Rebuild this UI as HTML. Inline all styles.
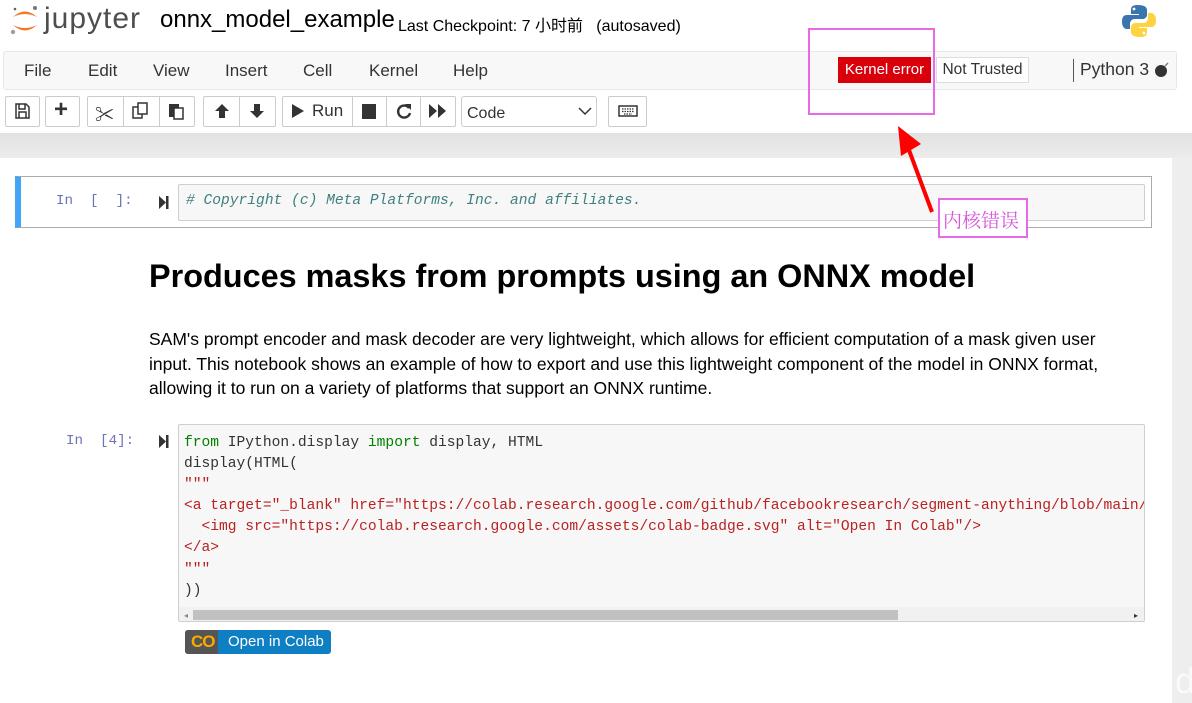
<!DOCTYPE html>
<html><head><meta charset="utf-8"><style>
*{margin:0;padding:0;box-sizing:border-box}
body{width:1192px;height:703px;overflow:hidden;background:#eee;font-family:"Liberation Sans","Noto Sans CJK SC",sans-serif;position:relative;color:#000}
.a{position:absolute}
.mono{font-family:"Liberation Mono","Noto Sans CJK SC",monospace;font-size:14.6px;white-space:pre;letter-spacing:0}
.btn{position:absolute;top:96px;height:31px;border:1px solid #ccc;background:#fff;border-radius:2px}
.menu span{position:absolute;top:61px;font-size:17px;color:#333}
.pr{font-family:"Liberation Mono",monospace;font-size:14.2px;color:#6b74b8;white-space:pre}
</style></head><body>
<div class="a" style="left:0;top:0;width:1192px;height:133px;background:#fff"></div>
<div class="a" style="left:0;top:133px;width:1192px;height:25px;background:linear-gradient(#e2e2e2,#ececec)"></div>
<div class="a" style="left:0;top:158px;width:1172px;height:545px;background:#fff"></div>
<svg class="a" style="left:8px;top:4px" width="34" height="34" viewBox="0 0 34 34">
<path d="M5 13 Q17 2 29 13 Q17 7 5 13Z" fill="#f37726"/>
<path d="M5 21 Q17 32 29 21 Q17 27 5 21Z" fill="#f37726"/>
<circle cx="27" cy="4" r="2" fill="#767677"/><circle cx="5" cy="28" r="2.2" fill="#9e9e9e"/><circle cx="7" cy="5" r="1.3" fill="#616262"/></svg>
<div class="a" style="left:44px;top:2px;font-size:30px;color:#4e4e4e;letter-spacing:1px">jupyter</div>
<div class="a" style="left:160px;top:6px;font-size:24px;color:#000">onnx_model_example</div>
<div class="a" style="left:398px;top:12px;font-size:16px;color:#000">Last Checkpoint: 7 小时前 &nbsp;&nbsp;(autosaved)</div>
<svg class="a" style="left:1121px;top:3px" width="36" height="36" viewBox="0 0 36 36">
<path d="M17 2c-7 0-7 3-7 5v4h8v1H6c-4 0-5 3-5 7s2 7 5 7h3v-5c0-3 2-5 5-5h8c2 0 4-2 4-4V7c0-3-3-5-9-5z" fill="#3a75b0"/>
<path d="M19 34c7 0 7-3 7-5v-4h-8v-1h12c4 0 5-3 5-7s-2-7-5-7h-3v5c0 3-2 5-5 5h-8c-2 0-4 2-4 4v5c0 3 3 5 9 5z" fill="#fdd43f"/>
<circle cx="13" cy="6" r="1.4" fill="#fff"/><circle cx="23" cy="30" r="1.4" fill="#fff"/></svg>
<div class="a" style="left:3px;top:51px;width:1174px;height:39px;background:#f8f8f8;border:1px solid #e7e7e7;border-radius:3px"></div>
<div class="menu"><span style="left:24px">File</span><span style="left:88px">Edit</span><span style="left:153px">View</span><span style="left:225px">Insert</span><span style="left:303px">Cell</span><span style="left:369px">Kernel</span><span style="left:453px">Help</span></div>
<div class="a" style="left:838px;top:57px;width:93px;height:26px;background:#d9000b;color:#fff;font-size:15px;line-height:26px;text-align:center">Kernel error</div>
<div class="a" style="left:936px;top:57px;width:93px;height:26px;background:#fff;border:1px solid #ddd;color:#333;font-size:15.5px;line-height:24px;text-align:center">Not Trusted</div>
<div class="a" style="left:1073px;top:59px;width:1px;height:23px;background:#555"></div>
<div class="a" style="left:1080px;top:59px;font-size:17.5px;color:#333">Python 3</div>
<svg class="a" style="left:1154px;top:62px" width="16" height="16"><circle cx="7" cy="9" r="6" fill="#333"/><path d="M11 4l3-3" stroke="#777" stroke-width="1.3"/></svg>
<div class="btn" style="left:5px;width:35px"></div>
<svg class="a" style="left:14px;top:103px" width="16" height="16"><path d="M2 1h10l3 3v11H2z M5 1v5h6V1 M5 9h7v6H5z" fill="none" stroke="#333" stroke-width="1.5"/></svg>
<div class="btn" style="left:45px;width:35px"></div>
<div class="a" style="left:54px;top:96px;font-size:24px;font-weight:bold;color:#333">+</div>
<div class="btn" style="left:87px;width:108px"></div>
<div class="a" style="left:123px;top:96px;width:1px;height:31px;background:#ccc"></div><div class="a" style="left:159px;top:96px;width:1px;height:31px;background:#ccc"></div>
<div class="a" style="left:95px;top:100px;font-size:19px;color:#333">✂</div>
<svg class="a" style="left:132px;top:102px" width="18" height="18"><rect x="1" y="5" width="9" height="11" fill="none" stroke="#333" stroke-width="1.5"/><rect x="6" y="1" width="9" height="11" fill="#fff" stroke="#333" stroke-width="1.5"/></svg>
<svg class="a" style="left:168px;top:102px" width="18" height="18"><rect x="1" y="2" width="10" height="13" fill="#333"/><rect x="6" y="6" width="9" height="11" fill="#fff" stroke="#333" stroke-width="1.5"/></svg>
<div class="btn" style="left:203px;width:73px"></div>
<div class="a" style="left:239px;top:96px;width:1px;height:31px;background:#ccc"></div>
<svg class="a" style="left:213px;top:102px" width="18" height="18"><path d="M9 2L2 9h4v7h6V9h4z" fill="#333"/></svg>
<svg class="a" style="left:248px;top:102px" width="18" height="18"><path d="M9 16L2 9h4V2h6v7h4z" fill="#333"/></svg>
<div class="btn" style="left:282px;width:174px"></div>
<div class="a" style="left:352px;top:96px;width:1px;height:31px;background:#ccc"></div><div class="a" style="left:386px;top:96px;width:1px;height:31px;background:#ccc"></div><div class="a" style="left:420px;top:96px;width:1px;height:31px;background:#ccc"></div>
<svg class="a" style="left:291px;top:103px" width="14" height="16"><path d="M1 1l12 7-12 7z" fill="#333"/></svg>
<div class="a" style="left:312px;top:101px;font-size:17px;color:#333">Run</div>
<div class="a" style="left:362px;top:104px;width:14px;height:15px;background:#333"></div>
<svg class="a" style="left:395px;top:102px" width="18" height="18"><path d="M14 6A6 6 0 1 0 15 11" fill="none" stroke="#333" stroke-width="2.4"/><path d="M10 2h6v6z" fill="#333"/></svg>
<svg class="a" style="left:428px;top:103px" width="20" height="16"><path d="M1 1l8 7-8 7zM10 1l8 7-8 7z" fill="#333"/></svg>
<div class="btn" style="left:461px;width:136px;border-radius:3px"></div>
<div class="a" style="left:467px;top:105px;font-size:16px;color:#333">Code</div>
<svg class="a" style="left:578px;top:106px" width="14" height="10"><path d="M1 2l6 6 6-6" fill="none" stroke="#333" stroke-width="1.5"/></svg>
<div class="btn" style="left:608px;width:39px"></div>
<svg class="a" style="left:618px;top:105px" width="20" height="12"><rect x="1" y="1" width="18" height="10" fill="none" stroke="#333" stroke-width="1.5"/><path d="M4 4h12M4 6.5h12M6 9h8" stroke="#333" stroke-width="1.2" stroke-dasharray="1.5 1"/></svg>
<div class="a" style="left:15px;top:176px;width:1137px;height:52px;border:1px solid #ababab;border-left:6px solid #42a5f5"></div>
<div class="a pr" style="left:56px;top:193px">In  [  ]:</div>
<svg class="a" style="left:158px;top:195px" width="12" height="15"><path d="M1 1l7 6.5-7 6.5z" fill="#333"/><rect x="8" y="1" width="2.5" height="13" fill="#333"/></svg>
<div class="a" style="left:178px;top:184px;width:967px;height:37px;background:#f7f7f7;border:1px solid #cfcfcf;border-radius:2px"></div>
<div class="a mono" style="left:186px;top:193px;color:#408080;font-style:italic">#&nbsp;Copyright&nbsp;(c)&nbsp;Meta&nbsp;Platforms,&nbsp;Inc.&nbsp;and&nbsp;affiliates.</div>
<div class="a" style="left:149px;top:258px;font-size:32.4px;font-weight:bold;white-space:nowrap">Produces masks from prompts using an ONNX model</div>
<div class="a" style="left:149px;top:327px;width:980px;font-size:17.5px;line-height:24.5px;color:#000">SAM's prompt encoder and mask decoder are very lightweight, which allows for efficient computation of a mask given user input. This notebook shows an example of how to export and use this lightweight component of the model in ONNX format, allowing it to run on a variety of platforms that support an ONNX runtime.</div>
<div class="a pr" style="left:66px;top:433px">In  [4]:</div>
<svg class="a" style="left:158px;top:434px" width="12" height="15"><path d="M1 1l7 6.5-7 6.5z" fill="#333"/><rect x="8" y="1" width="2.5" height="13" fill="#333"/></svg>
<div class="a" style="left:178px;top:424px;width:967px;height:198px;background:#f7f7f7;border:1px solid #cfcfcf;border-radius:2px;overflow:hidden">
<div class="mono" style="position:absolute;left:5px;top:8px;line-height:21.1px;color:#333"><span style="color:#008000">from</span> IPython.display <span style="color:#008000">import</span> display, HTML
display(HTML(
<span style="color:#ba2121">"""
&lt;a target="_blank" href="https://colab.research.google.com/github/facebookresearch/segment-anything/blob/main/
  &lt;img src="https://colab.research.google.com/assets/colab-badge.svg" alt="Open In Colab"/&gt;
&lt;/a&gt;
"""</span>
))</div>
<div style="position:absolute;left:0;top:182px;width:965px;height:15px;background:#f1f1f1"></div>
<div style="position:absolute;left:14px;top:185px;width:705px;height:10px;background:#c1c1c1"></div>
<div style="position:absolute;left:5px;top:186px;font-size:8px;color:#888">◂</div>
<div style="position:absolute;left:955px;top:186px;font-size:8px;color:#333">▸</div>
</div>
<div class="a" style="left:185px;top:630px;width:146px;height:24px;border-radius:3px;background:#0f7fc4;overflow:hidden">
<div style="position:absolute;left:0;top:0;width:33px;height:24px;background:#555"></div>
<div style="position:absolute;left:6px;top:2px;font-size:17px;font-weight:bold;color:#f9ab00;letter-spacing:-1px">CO</div>
<div style="position:absolute;left:43px;top:3px;font-size:15px;color:#fff">Open in Colab</div></div>
<div class="a" style="left:808px;top:28px;width:127px;height:87px;border:2px solid #e868e8"></div>
<svg class="a" style="left:890px;top:120px" width="50" height="100"><path d="M42 92L16 22" stroke="#f00" stroke-width="4"/><path d="M8 6l3 30 20-12z" fill="#f00"/></svg>
<div class="a" style="left:938px;top:198px;width:90px;height:40px;border:2px solid #e868e8;background:#fff"></div>
<div class="a" style="left:943px;top:206px;font-size:19px;color:#d957d9;font-family:'Noto Serif CJK SC',serif">内核错误</div>
<div class="a" style="left:1175px;top:660px;font-size:36px;color:#fafafa">d</div>
</body></html>
